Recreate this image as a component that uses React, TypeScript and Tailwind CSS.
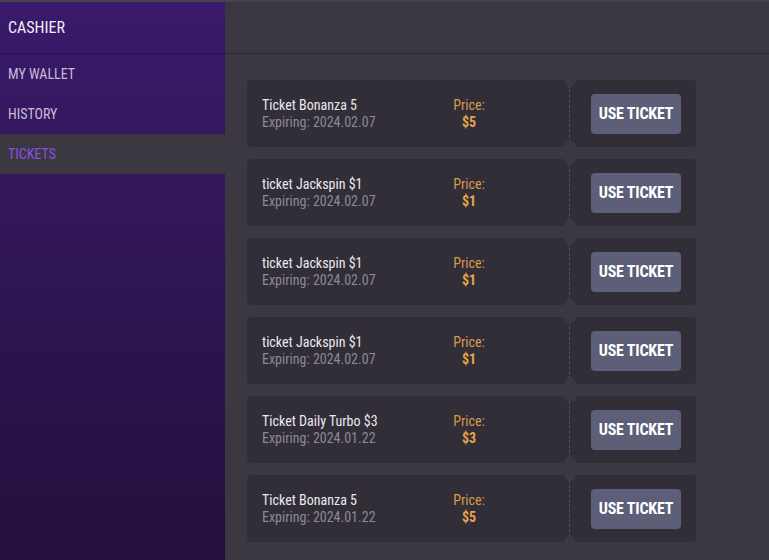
import React from "react";

const tickets = [
  { name: "Ticket Bonanza 5", expires: "2024.02.07", price: "$5" },
  { name: "ticket Jackspin $1", expires: "2024.02.07", price: "$1" },
  { name: "ticket Jackspin $1", expires: "2024.02.07", price: "$1" },
  { name: "ticket Jackspin $1", expires: "2024.02.07", price: "$1" },
  { name: "Ticket Daily Turbo $3", expires: "2024.01.22", price: "$3" },
  { name: "Ticket Bonanza 5", expires: "2024.01.22", price: "$5" },
];

function TicketCard({ name, expires, price }: { name: string; expires: string; price: string }) {
  return (
    <div className="relative flex h-[67px] w-[449px] rounded bg-[#312e37]">
      <div className="flex w-[323px] items-center border-r border-dashed border-[#514e59] pl-[15px]">
        <div className="w-[167px] text-[14px] leading-[17px]">
          <div className="text-[#ebe9f0]">{name}</div>
          <div className="text-[#8d8a94]">Expiring: {expires}</div>
        </div>
        <div className="w-[80px] text-center text-[14px] leading-[17px]">
          <div className="text-[#d99a48]">Price:</div>
          <div className="font-bold text-[#e8a54a]">{price}</div>
        </div>
      </div>
      <div className="flex flex-1 items-center pl-[21px]">
        <button className="h-[40px] w-[90px] rounded bg-[#5d5e78] text-[16px] font-bold tracking-[-0.2px] text-white">
          USE TICKET
        </button>
      </div>
      <div className="absolute left-[317px] top-[-6px] h-[12px] w-[12px] rounded-full bg-[#3b3842]" />
      <div className="absolute bottom-[-6px] left-[317px] h-[12px] w-[12px] rounded-full bg-[#3b3842]" />
    </div>
  );
}

export default function App() {
  return (
    <div
      className="flex h-[560px] w-[769px] flex-col overflow-hidden bg-[#3b3842] font-stretch-condensed"
      style={{ fontFamily: "'Roboto Condensed', Roboto, 'Liberation Sans Narrow', sans-serif" }}
    >
      <div className="h-[2px] shrink-0 bg-[#46434c]" />
      <div className="flex flex-1">
        <aside className="flex w-[225px] shrink-0 flex-col bg-gradient-to-b from-[#3a1a6b] to-[#23103d]">
          <div className="flex h-[52px] items-center border-b border-[#2a1347] pl-[8px] text-[16px] text-[#f1eef6]">
            CASHIER
          </div>
          <div className="flex h-[40px] items-center pl-[8px] text-[14px] text-[#c6bed6]">MY WALLET</div>
          <div className="flex h-[40px] items-center pl-[8px] text-[14px] text-[#c6bed6]">HISTORY</div>
          <div className="flex h-[40px] items-center bg-[#3b3842] pl-[8px] text-[14px] text-[#8d4ee0]">TICKETS</div>
        </aside>
        <main className="flex flex-1 flex-col">
          <div className="h-[52px] shrink-0 border-b border-[#2c2931] bg-[#3a3741]" />
          <div className="flex flex-col gap-[12px] pl-[22px] pt-[26px]">
            {tickets.map((t, i) => (
              <TicketCard key={i} {...t} />
            ))}
          </div>
        </main>
      </div>
    </div>
  );
}
